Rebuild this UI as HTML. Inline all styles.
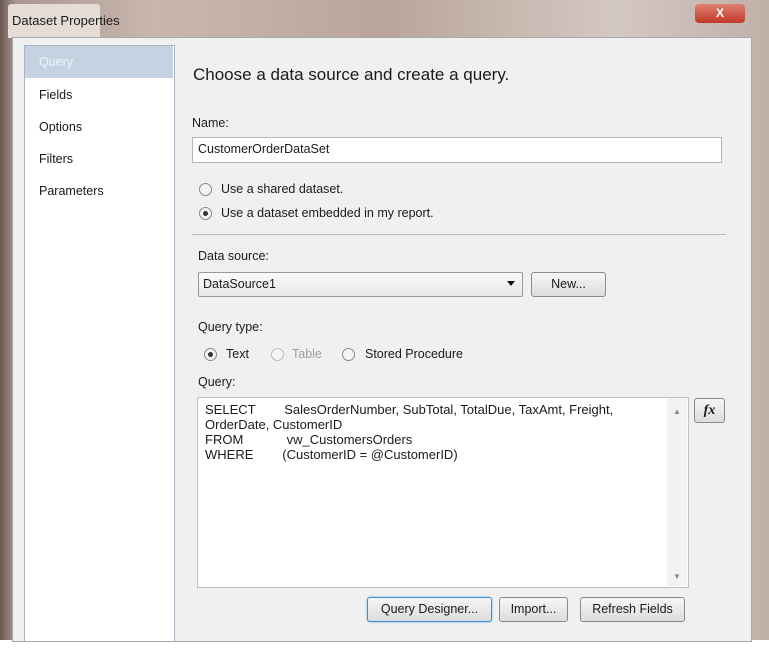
<!DOCTYPE html><html><head><style>
body{margin:0;width:769px;height:654px;overflow:hidden;background:#fff;font-family:"Liberation Sans",sans-serif;font-size:12.5px;color:#1a1a1a;position:relative}
.a{position:absolute}
.btn{position:absolute;border:1px solid #8a8a8a;border-radius:3px;background:linear-gradient(#f6f6f6,#dcdcdc);text-align:center;line-height:23px;font-size:12.5px}
.rad{position:absolute;width:11px;height:11px;border:1px solid #888;border-radius:50%;background:#f4f4f4}
.rad.on::after{content:"";position:absolute;left:3px;top:3px;width:5px;height:5px;border-radius:50%;background:#333}
</style></head><body>
<div class="a" style="left:0;top:0;width:769px;height:640px;background:linear-gradient(90deg,#6a5a52 0,#a89890 2%,#c9b7ae 20%,#b9a59a 50%,#d4c8c2 80%,#bfb0a8 100%)"></div>
<div class="a" style="left:8px;top:4px;width:92px;height:34px;background:#e6dcd6;border-radius:3px 3px 0 0"></div>
<div class="a" style="left:12px;top:13px;font-size:13px">Dataset Properties</div>
<div class="a" style="left:695px;top:4px;width:50px;height:19px;border-radius:4px;background:linear-gradient(#e08070,#c03a28);color:#fff;text-align:center;font-weight:bold;font-size:12px;line-height:18px">X</div>
<div class="a" style="left:12px;top:37px;width:738px;height:603px;background:#f0f0f0;border:1px solid #a9a9a9"></div>
<div class="a" style="left:24px;top:45px;width:149px;height:595px;background:#fff;border:1px solid #a8b4c2;border-bottom:none"></div>
<div class="a" style="left:25px;top:46px;width:148px;height:32px;background:#c4d2e1"></div>
<div class="a" style="left:39px;top:55px;color:#f0f4f8">Query</div>
<div class="a" style="left:39px;top:88px">Fields</div>
<div class="a" style="left:39px;top:120px">Options</div>
<div class="a" style="left:39px;top:152px">Filters</div>
<div class="a" style="left:39px;top:184px">Parameters</div>
<div class="a" style="left:193px;top:65px;font-size:17px">Choose a data source and create a query.</div>
<div class="a" style="left:192px;top:116px">Name:</div>
<div class="a" style="left:192px;top:137px;width:528px;height:24px;background:#fff;border:1px solid #b5b5b5"></div>
<div class="a" style="left:198px;top:142px">CustomerOrderDataSet</div>
<div class="rad" style="left:199px;top:183px"></div><div class="a" style="left:221px;top:182px">Use a shared dataset.</div>
<div class="rad on" style="left:199px;top:207px"></div><div class="a" style="left:221px;top:206px">Use a dataset embedded in my report.</div>
<div class="a" style="left:192px;top:234px;width:534px;height:1px;background:#bbb"></div>
<div class="a" style="left:198px;top:249px">Data source:</div>
<div class="a" style="left:198px;top:272px;width:323px;height:23px;background:linear-gradient(#fafafa,#e8e8e8);border:1px solid #999;border-radius:2px"></div>
<div class="a" style="left:203px;top:277px">DataSource1</div>
<div class="a" style="left:507px;top:281px;border-left:4px solid transparent;border-right:4px solid transparent;border-top:5px solid #111"></div>
<div class="btn" style="left:531px;top:272px;width:73px">New...</div>
<div class="a" style="left:198px;top:320px">Query type:</div>
<div class="rad on" style="left:204px;top:348px"></div><div class="a" style="left:226px;top:347px">Text</div>
<div class="rad" style="left:271px;top:348px;border-color:#bbb"></div><div class="a" style="left:292px;top:347px;color:#a0a0a0">Table</div>
<div class="rad" style="left:342px;top:348px"></div><div class="a" style="left:365px;top:347px">Stored Procedure</div>
<div class="a" style="left:198px;top:375px">Query:</div>
<div class="a" style="left:197px;top:397px;width:490px;height:189px;background:#fff;border:1px solid #c0c0c0"></div>
<div class="a" style="left:667px;top:398px;width:20px;height:188px;background:#f2f2f2"></div>
<div class="a" style="left:673px;top:407px;font-size:8px;color:#888">▲</div>
<div class="a" style="left:673px;top:572px;font-size:8px;color:#888">▼</div>
<div class="a" style="left:205px;top:402px;line-height:15px;font-size:13px;white-space:pre">SELECT        SalesOrderNumber, SubTotal, TotalDue, TaxAmt, Freight,
OrderDate, CustomerID
FROM            vw_CustomersOrders
WHERE        (CustomerID = @CustomerID)</div>
<div class="btn" style="left:694px;top:398px;width:29px;height:23px;font-family:'Liberation Serif',serif;font-style:italic;font-weight:bold;font-size:14px">fx</div>
<div class="btn" style="left:367px;top:597px;width:123px;border-color:#3c8ccf;box-shadow:0 0 2px #7ab8e8">Query Designer...</div>
<div class="btn" style="left:499px;top:597px;width:67px">Import...</div>
<div class="btn" style="left:580px;top:597px;width:103px">Refresh Fields</div>
</body></html>
